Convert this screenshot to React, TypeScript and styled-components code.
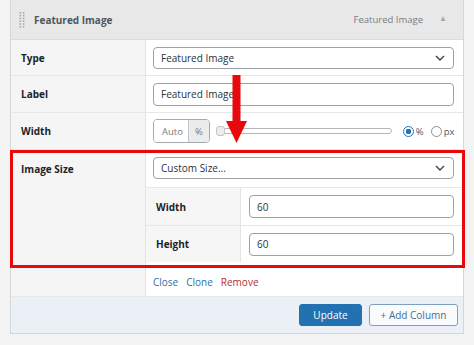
import React from "react";
import styled, { createGlobalStyle } from "styled-components";

const GlobalStyle = createGlobalStyle`
    body {
        margin: 0;
        background: #f3f3f4;
        font-family: "Open Sans", "Noto Sans", sans-serif;
        font-size: 10px;
        color: #2c3338;
    }
`;

const ChevronDown = () => (
    <svg width="10" height="6" viewBox="0 0 10 6">
        <path d="M1 1l4 4 4-4" fill="none" stroke="#3c434a" strokeWidth="1.4" />
    </svg>
);

const DragHandle = () => (
    <HandleSvg width="6" height="17" viewBox="0 0 6 17">
        {[0, 1, 2, 3, 4, 5].map((i) => (
            <g key={i} fill="#a7aaad">
                <rect x="0.5" y={1 + i * 2.8} width="1.6" height="1.6" />
                <rect x="3.8" y={1 + i * 2.8} width="1.6" height="1.6" />
            </g>
        ))}
    </HandleSvg>
);

const Select = ({ value }: { value: string }) => (
    <SelectBox>
        <span>{value}</span>
        <ChevronDown />
    </SelectBox>
);

const App: React.FC = () => {
    return (
        <>
            <GlobalStyle />
            <Panel>
                <Header>
                    <DragHandle />
                    <HeaderTitle>Featured Image</HeaderTitle>
                    <HeaderType>Featured Image</HeaderType>
                    <Toggle>▲</Toggle>
                </Header>

                <Row $height={36}>
                    <LabelCell>Type</LabelCell>
                    <ValueCell>
                        <Select value="Featured Image" />
                    </ValueCell>
                </Row>

                <Row $height={37}>
                    <LabelCell>Label</LabelCell>
                    <ValueCell>
                        <TextInput>Featured Image</TextInput>
                    </ValueCell>
                </Row>

                <Row $height={37}>
                    <LabelCell>Width</LabelCell>
                    <ValueCell>
                        <WidthControls>
                            <UnitGroup>
                                <UnitPart>Auto</UnitPart>
                                <UnitPart $active>%</UnitPart>
                            </UnitGroup>
                            <Slider>
                                <Thumb />
                            </Slider>
                            <RadioLabel>
                                <Radio $checked />%
                            </RadioLabel>
                            <RadioLabel>
                                <Radio />px
                            </RadioLabel>
                        </WidthControls>
                    </ValueCell>
                </Row>

                <SizeRow>
                    <LabelCell $top>Image Size</LabelCell>
                    <SizeValue>
                        <SelectWrap>
                            <Select value="Custom Size..." />
                        </SelectWrap>
                        <SubTable>
                            <SubRow $height={38}>
                                <SubLabel>Width</SubLabel>
                                <SubValue>
                                    <TextInput>60</TextInput>
                                </SubValue>
                            </SubRow>
                            <SubRow $height={37}>
                                <SubLabel>Height</SubLabel>
                                <SubValue>
                                    <TextInput>60</TextInput>
                                </SubValue>
                            </SubRow>
                        </SubTable>
                    </SizeValue>
                </SizeRow>

                <Row $height={29}>
                    <LabelCell />
                    <Links>
                        <Link>Close</Link>
                        <Link>Clone</Link>
                        <Link $danger>Remove</Link>
                    </Links>
                </Row>

                <Footer>
                    <PrimaryButton>Update</PrimaryButton>
                    <SecondaryButton>+ Add Column</SecondaryButton>
                </Footer>

                <Arrow width="21" height="68" viewBox="0 0 21 68">
                    <rect x="6.5" y="0" width="8" height="47" fill="#e8090c" />
                    <path d="M0 46h21L10.5 68z" fill="#e8090c" />
                </Arrow>
            </Panel>
        </>
    );
};

export default App;

// Styled Components
const Panel = styled.div`
    position: relative;
    margin-left: 10px;
    width: 452px;
    border: 1px solid #d4d6d8;
    border-top: none;
    background: #fff;
`;

const Header = styled.div`
    height: 40px;
    box-sizing: border-box;
    display: flex;
    align-items: center;
    padding: 0 0 0 8px;
    background: #e8e8e8;
    border-bottom: 1px solid #dcdcde;
`;

const HandleSvg = styled.svg`
    margin-right: 9px;
    flex-shrink: 0;
`;

const HeaderTitle = styled.div`
    flex: 1;
    font-weight: 700;
    color: #50575e;
`;

const HeaderType = styled.div`
    color: #787c82;
    font-size: 9.5px;
`;

const Toggle = styled.div`
    width: 40px;
    text-align: center;
    color: #a7aaad;
    font-size: 8px;
    padding-bottom: 4px;
`;

const Row = styled.div<{ $height: number }>`
    display: grid;
    grid-template-columns: 135px 1fr;
    height: ${({ $height }) => $height}px;
    box-sizing: border-box;
    border-bottom: 1px solid #e6e7e8;
`;

const LabelCell = styled.div<{ $top?: boolean }>`
    display: flex;
    align-items: ${({ $top }) => ($top ? "flex-start" : "center")};
    padding: ${({ $top }) => ($top ? "12px 10px 0" : "0 10px")};
    background: #f5f5f5;
    border-right: 1px solid #e3e4e5;
    font-weight: 700;
    color: #1d2327;
`;

const ValueCell = styled.div`
    display: flex;
    align-items: center;
    padding: 0 9px 0 7px;
`;

const SelectBox = styled.div`
    flex: 1;
    height: 22px;
    box-sizing: border-box;
    display: flex;
    align-items: center;
    justify-content: space-between;
    padding: 0 8px 0 7px;
    border: 1px solid #9ea1a5;
    border-radius: 4px;
    background: #fff;
    color: #2c3338;
`;

const TextInput = styled.div`
    flex: 1;
    height: 23px;
    box-sizing: border-box;
    display: flex;
    align-items: center;
    padding: 0 7px;
    border: 1px solid #9ea1a5;
    border-radius: 4px;
    background: #fff;
    color: #2c3338;
`;

const WidthControls = styled.div`
    flex: 1;
    display: flex;
    align-items: center;
`;

const UnitGroup = styled.div`
    display: flex;
    height: 22px;
    border: 1px solid #a7aaad;
    border-radius: 4px;
    overflow: hidden;
    margin-right: 6px;
`;

const UnitPart = styled.div<{ $active?: boolean }>`
    display: flex;
    align-items: center;
    padding: 0 ${({ $active }) => ($active ? "6px" : "5px 0 8px")};
    background: ${({ $active }) => ($active ? "#ececec" : "#fff")};
    border-left: ${({ $active }) => ($active ? "1px solid #c3c4c7" : "none")};
    color: #787c82;
    font-size: 9.5px;
`;

const Slider = styled.div`
    position: relative;
    width: 176px;
    height: 6px;
    box-sizing: border-box;
    border: 1px solid #b4b6b9;
    border-radius: 4px;
    background: #fff;
    margin-right: 11px;
`;

const Thumb = styled.div`
    position: absolute;
    left: -1px;
    top: -3px;
    width: 9px;
    height: 10px;
    box-sizing: border-box;
    border: 1px solid #c3c4c7;
    border-radius: 3px;
    background: #ececec;
`;

const RadioLabel = styled.div`
    display: flex;
    align-items: center;
    gap: 2px;
    margin-right: 7px;
    color: #50575e;
    font-size: 9.5px;
`;

const Radio = styled.span<{ $checked?: boolean }>`
    width: 11px;
    height: 11px;
    box-sizing: border-box;
    border-radius: 50%;
    border: 1px solid ${({ $checked }) => ($checked ? "#2271b1" : "#8c8f94")};
    background: ${({ $checked }) =>
        $checked ? "radial-gradient(circle, #2271b1 2.6px, #fff 3px)" : "#fff"};
`;

const SizeRow = styled.div`
    position: relative;
    display: grid;
    grid-template-columns: 135px 1fr;
    height: 118px;
    box-sizing: border-box;

    &::after {
        content: "";
        position: absolute;
        top: 0;
        left: -1px;
        right: -2px;
        bottom: 0;
        border: 3px solid #e8090c;
        pointer-events: none;
    }
`;

const SizeValue = styled.div`
    display: flex;
    flex-direction: column;
`;

const SelectWrap = styled.div`
    display: flex;
    padding: 7px 9px 8px 7px;
`;

const SubTable = styled.div`
    display: flex;
    flex-direction: column;
`;

const SubRow = styled.div<{ $height: number }>`
    display: grid;
    grid-template-columns: 95px 1fr;
    height: ${({ $height }) => $height}px;
    box-sizing: border-box;
    border-top: 1px solid #e6e7e8;
`;

const SubLabel = styled.div`
    display: flex;
    align-items: center;
    padding: 0 10px;
    background: #f6f6f6;
    border-right: 1px solid #e3e4e5;
    font-weight: 700;
    color: #1d2327;
`;

const SubValue = styled.div`
    display: flex;
    align-items: center;
    padding: 0 9px 0 8px;
`;

const Links = styled.div`
    display: flex;
    align-items: center;
    gap: 8px;
    padding: 0 7px;
`;

const Link = styled.a<{ $danger?: boolean }>`
    color: ${({ $danger }) => ($danger ? "#b32d2e" : "#2f6fa8")};
    text-decoration: none;
    cursor: pointer;
`;

const Footer = styled.div`
    height: 36px;
    box-sizing: border-box;
    display: flex;
    align-items: center;
    justify-content: flex-end;
    gap: 7px;
    padding: 0 5px 0 0;
    background: #eaf0f6;
`;

const PrimaryButton = styled.button`
    width: 63px;
    height: 22px;
    padding: 0;
    border: 1px solid #2271b1;
    border-radius: 3px;
    background: #2271b1;
    color: #fff;
    font-family: inherit;
    font-size: 10px;
`;

const SecondaryButton = styled.button`
    width: 89px;
    height: 22px;
    padding: 0;
    border: 1px solid #7f9fbf;
    border-radius: 3px;
    background: #fafbfc;
    color: #3f6f99;
    font-family: inherit;
    font-size: 10px;
`;

const Arrow = styled.svg`
    position: absolute;
    left: 215px;
    top: 75px;
    pointer-events: none;
`;
